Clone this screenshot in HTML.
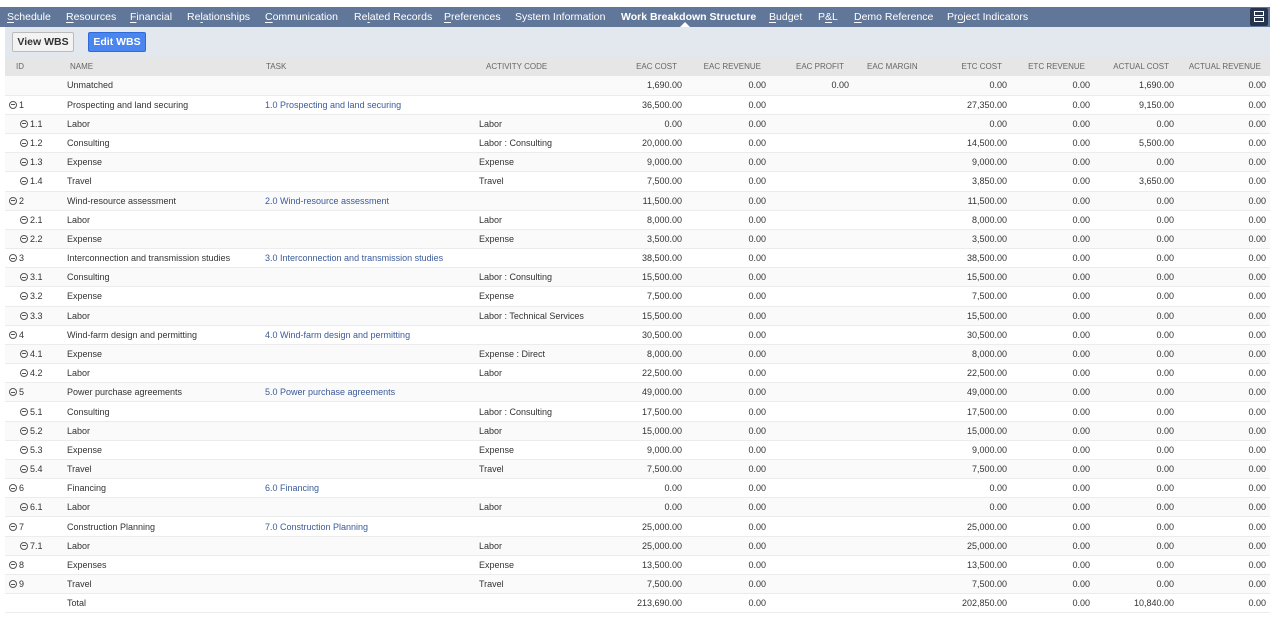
<!DOCTYPE html>
<html><head><meta charset="utf-8"><style>
*{margin:0;padding:0;box-sizing:border-box}
body{width:1280px;height:618px;background:#fff;font-family:"Liberation Sans",sans-serif;position:relative;overflow:hidden}
.nav{position:absolute;left:0;top:7px;width:1270px;height:20px;background:#607799}
.nav span{position:absolute;top:4px;color:#fff;font-size:10.5px;white-space:nowrap}
.nav u{text-decoration-thickness:1px;text-underline-offset:2px}
.nav .act{font-weight:bold}
.caret{position:absolute;left:680px;top:15px;width:0;height:0;border-left:5px solid transparent;border-right:5px solid transparent;border-bottom:5px solid #fff}
.ico{position:absolute;left:1250px;top:1px;width:18px;height:18px;background:#27344d;border-radius:2px}
.ico i{position:absolute;left:4px;width:10px;height:5px;border:1px solid #fff}
.bar{position:absolute;left:5px;top:27px;width:1265px;height:30px;background:#e3e7ee}
.btn{position:absolute;top:5px;height:20px;font-size:10.5px;font-weight:bold;line-height:18px;text-align:center;border-radius:2px}
.b1{left:7px;width:62px;background:#f3f3f3;border:1px solid #bbb;color:#333}
.b2{left:83px;width:58px;background:#4a85f0;border:1px solid #2f6bd6;color:#fff}
table{position:absolute;left:5px;top:57px;width:1265px;border-collapse:collapse;font-size:9px;color:#333}
th{height:19px;background:#e6e6e6;color:#666;font-weight:normal;font-size:8px;text-align:left;padding:0 4px}
th.r{padding-right:9px}
td{height:19.18px;border-bottom:1px solid #ececec;padding:0 4px;white-space:nowrap}
tr:nth-child(even) td{background:#fafafa}
.r{text-align:right}
a{color:#3b5b9b;text-decoration:none}
.c{display:inline-block;width:8px;height:8px;border:1px solid #555;border-radius:50%;position:relative;vertical-align:-1px;margin-right:2px}
.c:after{content:"";position:absolute;left:1px;top:2.5px;width:4px;height:1px;background:#555}
.s{padding-left:15px}
td:nth-child(2),td:nth-child(3){padding-left:5px}
</style></head><body>
<div class="nav">
<span style="left:7px"><u>S</u>chedule</span><span style="left:66px"><u>R</u>esources</span><span style="left:130px"><u>F</u>inancial</span><span style="left:187px">Re<u>l</u>ationships</span><span style="left:265px"><u>C</u>ommunication</span><span style="left:354px">Re<u>l</u>ated Records</span><span style="left:444px"><u>P</u>references</span><span style="left:515px">System Information</span><span class="act" style="left:621px">Work Breakdown Structure</span><span style="left:769px"><u>B</u>udget</span><span style="left:818px">P<u>&amp;</u>L</span><span style="left:854px"><u>D</u>emo Reference</span><span style="left:947px">Pr<u>o</u>ject Indicators</span>
<div class="caret"></div>
<div class="ico"><i style="top:3px"></i><i style="top:9px"></i></div>
</div>
<div class="bar"><div class="btn b1">View WBS</div><div class="btn b2">Edit WBS</div></div>
<table>
<colgroup><col style="width:57px"><col style="width:198px"><col style="width:215px"><col style="width:131px"><col style="width:80px"><col style="width:84px"><col style="width:83px"><col style="width:75px"><col style="width:83px"><col style="width:83px"><col style="width:84px"><col style="width:92px"></colgroup>
<tr><th style="padding-left:11px">ID</th><th style="padding-left:8px">NAME</th><th style="padding-left:6px">TASK</th><th style="padding-left:11px">ACTIVITY CODE</th><th class="r">EAC COST</th><th class="r">EAC REVENUE</th><th class="r">EAC PROFIT</th><th style="padding-left:14px">EAC MARGIN</th><th class="r">ETC COST</th><th class="r">ETC REVENUE</th><th class="r">ACTUAL COST</th><th class="r">ACTUAL REVENUE</th></tr>
<tr><td></td><td>Unmatched</td><td></td><td></td><td class="r">1,690.00</td><td class="r">0.00</td><td class="r">0.00</td><td></td><td class="r">0.00</td><td class="r">0.00</td><td class="r">1,690.00</td><td class="r">0.00</td></tr>
<tr><td><span class="c"></span>1</td><td>Prospecting and land securing</td><td><a>1.0 Prospecting and land securing</a></td><td></td><td class="r">36,500.00</td><td class="r">0.00</td><td></td><td></td><td class="r">27,350.00</td><td class="r">0.00</td><td class="r">9,150.00</td><td class="r">0.00</td></tr>
<tr><td class="s"><span class="c"></span>1.1</td><td>Labor</td><td></td><td>Labor</td><td class="r">0.00</td><td class="r">0.00</td><td></td><td></td><td class="r">0.00</td><td class="r">0.00</td><td class="r">0.00</td><td class="r">0.00</td></tr>
<tr><td class="s"><span class="c"></span>1.2</td><td>Consulting</td><td></td><td>Labor : Consulting</td><td class="r">20,000.00</td><td class="r">0.00</td><td></td><td></td><td class="r">14,500.00</td><td class="r">0.00</td><td class="r">5,500.00</td><td class="r">0.00</td></tr>
<tr><td class="s"><span class="c"></span>1.3</td><td>Expense</td><td></td><td>Expense</td><td class="r">9,000.00</td><td class="r">0.00</td><td></td><td></td><td class="r">9,000.00</td><td class="r">0.00</td><td class="r">0.00</td><td class="r">0.00</td></tr>
<tr><td class="s"><span class="c"></span>1.4</td><td>Travel</td><td></td><td>Travel</td><td class="r">7,500.00</td><td class="r">0.00</td><td></td><td></td><td class="r">3,850.00</td><td class="r">0.00</td><td class="r">3,650.00</td><td class="r">0.00</td></tr>
<tr><td><span class="c"></span>2</td><td>Wind-resource assessment</td><td><a>2.0 Wind-resource assessment</a></td><td></td><td class="r">11,500.00</td><td class="r">0.00</td><td></td><td></td><td class="r">11,500.00</td><td class="r">0.00</td><td class="r">0.00</td><td class="r">0.00</td></tr>
<tr><td class="s"><span class="c"></span>2.1</td><td>Labor</td><td></td><td>Labor</td><td class="r">8,000.00</td><td class="r">0.00</td><td></td><td></td><td class="r">8,000.00</td><td class="r">0.00</td><td class="r">0.00</td><td class="r">0.00</td></tr>
<tr><td class="s"><span class="c"></span>2.2</td><td>Expense</td><td></td><td>Expense</td><td class="r">3,500.00</td><td class="r">0.00</td><td></td><td></td><td class="r">3,500.00</td><td class="r">0.00</td><td class="r">0.00</td><td class="r">0.00</td></tr>
<tr><td><span class="c"></span>3</td><td>Interconnection and transmission studies</td><td><a>3.0 Interconnection and transmission studies</a></td><td></td><td class="r">38,500.00</td><td class="r">0.00</td><td></td><td></td><td class="r">38,500.00</td><td class="r">0.00</td><td class="r">0.00</td><td class="r">0.00</td></tr>
<tr><td class="s"><span class="c"></span>3.1</td><td>Consulting</td><td></td><td>Labor : Consulting</td><td class="r">15,500.00</td><td class="r">0.00</td><td></td><td></td><td class="r">15,500.00</td><td class="r">0.00</td><td class="r">0.00</td><td class="r">0.00</td></tr>
<tr><td class="s"><span class="c"></span>3.2</td><td>Expense</td><td></td><td>Expense</td><td class="r">7,500.00</td><td class="r">0.00</td><td></td><td></td><td class="r">7,500.00</td><td class="r">0.00</td><td class="r">0.00</td><td class="r">0.00</td></tr>
<tr><td class="s"><span class="c"></span>3.3</td><td>Labor</td><td></td><td>Labor : Technical Services</td><td class="r">15,500.00</td><td class="r">0.00</td><td></td><td></td><td class="r">15,500.00</td><td class="r">0.00</td><td class="r">0.00</td><td class="r">0.00</td></tr>
<tr><td><span class="c"></span>4</td><td>Wind-farm design and permitting</td><td><a>4.0 Wind-farm design and permitting</a></td><td></td><td class="r">30,500.00</td><td class="r">0.00</td><td></td><td></td><td class="r">30,500.00</td><td class="r">0.00</td><td class="r">0.00</td><td class="r">0.00</td></tr>
<tr><td class="s"><span class="c"></span>4.1</td><td>Expense</td><td></td><td>Expense : Direct</td><td class="r">8,000.00</td><td class="r">0.00</td><td></td><td></td><td class="r">8,000.00</td><td class="r">0.00</td><td class="r">0.00</td><td class="r">0.00</td></tr>
<tr><td class="s"><span class="c"></span>4.2</td><td>Labor</td><td></td><td>Labor</td><td class="r">22,500.00</td><td class="r">0.00</td><td></td><td></td><td class="r">22,500.00</td><td class="r">0.00</td><td class="r">0.00</td><td class="r">0.00</td></tr>
<tr><td><span class="c"></span>5</td><td>Power purchase agreements</td><td><a>5.0 Power purchase agreements</a></td><td></td><td class="r">49,000.00</td><td class="r">0.00</td><td></td><td></td><td class="r">49,000.00</td><td class="r">0.00</td><td class="r">0.00</td><td class="r">0.00</td></tr>
<tr><td class="s"><span class="c"></span>5.1</td><td>Consulting</td><td></td><td>Labor : Consulting</td><td class="r">17,500.00</td><td class="r">0.00</td><td></td><td></td><td class="r">17,500.00</td><td class="r">0.00</td><td class="r">0.00</td><td class="r">0.00</td></tr>
<tr><td class="s"><span class="c"></span>5.2</td><td>Labor</td><td></td><td>Labor</td><td class="r">15,000.00</td><td class="r">0.00</td><td></td><td></td><td class="r">15,000.00</td><td class="r">0.00</td><td class="r">0.00</td><td class="r">0.00</td></tr>
<tr><td class="s"><span class="c"></span>5.3</td><td>Expense</td><td></td><td>Expense</td><td class="r">9,000.00</td><td class="r">0.00</td><td></td><td></td><td class="r">9,000.00</td><td class="r">0.00</td><td class="r">0.00</td><td class="r">0.00</td></tr>
<tr><td class="s"><span class="c"></span>5.4</td><td>Travel</td><td></td><td>Travel</td><td class="r">7,500.00</td><td class="r">0.00</td><td></td><td></td><td class="r">7,500.00</td><td class="r">0.00</td><td class="r">0.00</td><td class="r">0.00</td></tr>
<tr><td><span class="c"></span>6</td><td>Financing</td><td><a>6.0 Financing</a></td><td></td><td class="r">0.00</td><td class="r">0.00</td><td></td><td></td><td class="r">0.00</td><td class="r">0.00</td><td class="r">0.00</td><td class="r">0.00</td></tr>
<tr><td class="s"><span class="c"></span>6.1</td><td>Labor</td><td></td><td>Labor</td><td class="r">0.00</td><td class="r">0.00</td><td></td><td></td><td class="r">0.00</td><td class="r">0.00</td><td class="r">0.00</td><td class="r">0.00</td></tr>
<tr><td><span class="c"></span>7</td><td>Construction Planning</td><td><a>7.0 Construction Planning</a></td><td></td><td class="r">25,000.00</td><td class="r">0.00</td><td></td><td></td><td class="r">25,000.00</td><td class="r">0.00</td><td class="r">0.00</td><td class="r">0.00</td></tr>
<tr><td class="s"><span class="c"></span>7.1</td><td>Labor</td><td></td><td>Labor</td><td class="r">25,000.00</td><td class="r">0.00</td><td></td><td></td><td class="r">25,000.00</td><td class="r">0.00</td><td class="r">0.00</td><td class="r">0.00</td></tr>
<tr><td><span class="c"></span>8</td><td>Expenses</td><td></td><td>Expense</td><td class="r">13,500.00</td><td class="r">0.00</td><td></td><td></td><td class="r">13,500.00</td><td class="r">0.00</td><td class="r">0.00</td><td class="r">0.00</td></tr>
<tr><td><span class="c"></span>9</td><td>Travel</td><td></td><td>Travel</td><td class="r">7,500.00</td><td class="r">0.00</td><td></td><td></td><td class="r">7,500.00</td><td class="r">0.00</td><td class="r">0.00</td><td class="r">0.00</td></tr>
<tr><td></td><td>Total</td><td></td><td></td><td class="r">213,690.00</td><td class="r">0.00</td><td></td><td></td><td class="r">202,850.00</td><td class="r">0.00</td><td class="r">10,840.00</td><td class="r">0.00</td></tr>
</table>
</body></html>
